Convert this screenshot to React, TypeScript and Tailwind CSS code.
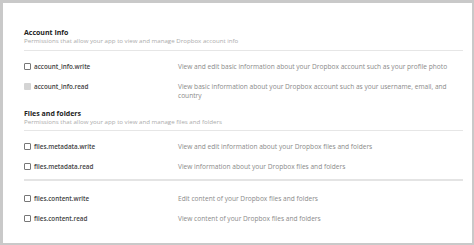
import React from "react";

interface Scope {
  name: string;
  desc: string;
  checked?: boolean;
}

function ScopeRow({ scope }: { scope: Scope }) {
  return (
    <div className="flex items-start">
      <div className="flex w-[154px] shrink-0 items-center gap-[3px]">
        {scope.checked ? (
          <span className="block h-[7px] w-[7px] rounded-[1px] bg-[#d4d4d4]" />
        ) : (
          <span className="block h-[7px] w-[7px] rounded-[1px] border border-[#777] bg-white" />
        )}
        <span className="text-[6.3px] leading-[9px] font-semibold text-[#444]">{scope.name}</span>
      </div>
      <div className="w-[280px] text-[6.6px] leading-[9px] text-[#8a8a8a]">{scope.desc}</div>
    </div>
  );
}

function SectionHead({ title, sub }: { title: string; sub: string }) {
  return (
    <div>
      <h3 className="text-[7px] leading-[8px] font-bold text-[#222]">{title}</h3>
      <p className="text-[6.15px] leading-[8px] text-[#ababab]">{sub}</p>
    </div>
  );
}

export default function App() {
  return (
    <div
      className="h-[245px] w-[474px] bg-[#c9c9c9] pt-[3px] pl-[3px] pr-[2px] pb-[2px]"
      style={{ fontFamily: '"Open Sans", "Liberation Sans", sans-serif' }}
    >
      <div className="h-full bg-white pl-[21px] pr-[9px] pt-[26px]">
        <SectionHead
          title="Account Info"
          sub="Permissions that allow your app to view and manage Dropbox account info"
        />
        <div className="mt-[5px] h-px bg-[#e6e6e6]" />
        <div className="mt-[11px] flex flex-col gap-[11px]">
          <ScopeRow
            scope={{
              name: "account_info.write",
              desc: "View and edit basic information about your Dropbox account such as your profile photo",
            }}
          />
          <ScopeRow
            scope={{
              name: "account_info.read",
              desc: "View basic information about your Dropbox account such as your username, email, and country",
              checked: true,
            }}
          />
        </div>

        <div className="mt-[10px]">
          <SectionHead
            title="Files and folders"
            sub="Permissions that allow your app to view and manage files and folders"
          />
        </div>
        <div className="mt-[4px] h-px bg-[#e6e6e6]" />
        <div className="mt-[11px] flex flex-col gap-[11px]">
          <ScopeRow
            scope={{
              name: "files.metadata.write",
              desc: "View and edit information about your Dropbox files and folders",
            }}
          />
          <ScopeRow
            scope={{
              name: "files.metadata.read",
              desc: "View information about your Dropbox files and folders",
            }}
          />
        </div>
        <div className="mt-[8px] h-[2px] bg-[#e4e4e4]" />
        <div className="mt-[13px] flex flex-col gap-[11px]">
          <ScopeRow
            scope={{
              name: "files.content.write",
              desc: "Edit content of your Dropbox files and folders",
            }}
          />
          <ScopeRow
            scope={{
              name: "files.content.read",
              desc: "View content of your Dropbox files and folders",
            }}
          />
        </div>
      </div>
    </div>
  );
}
